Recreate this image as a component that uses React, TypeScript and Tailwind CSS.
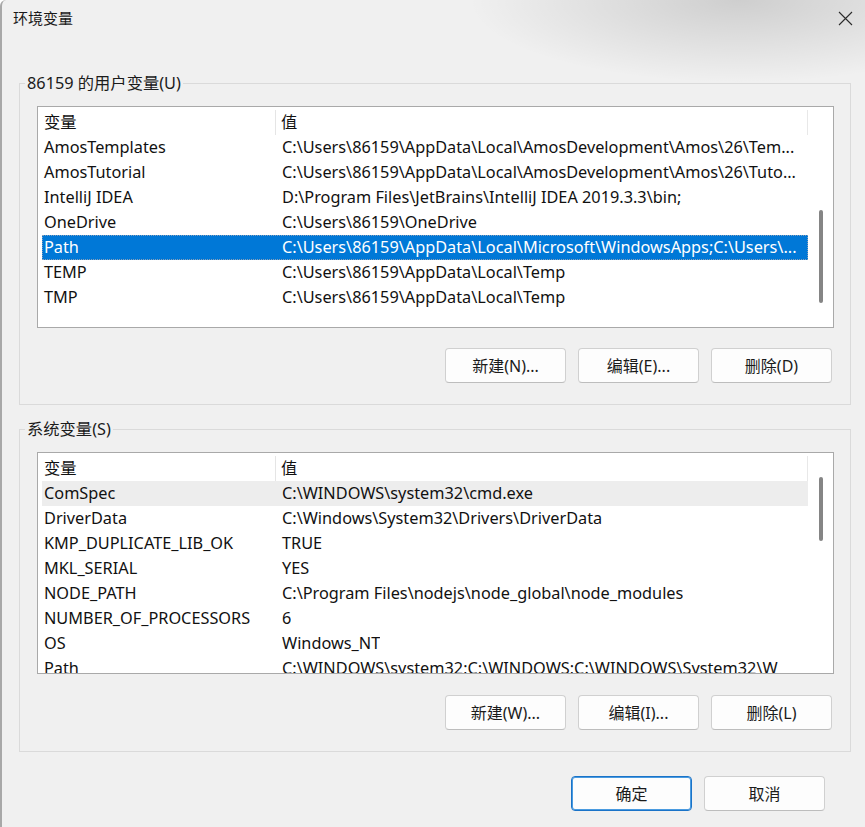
import React from "react";

type Row = { name: string; value: string };

const USER_VARS: Row[] = [
  { name: "AmosTemplates", value: "C:\\Users\\86159\\AppData\\Local\\AmosDevelopment\\Amos\\26\\Tem..." },
  { name: "AmosTutorial", value: "C:\\Users\\86159\\AppData\\Local\\AmosDevelopment\\Amos\\26\\Tuto..." },
  { name: "IntelliJ IDEA", value: "D:\\Program Files\\JetBrains\\IntelliJ IDEA 2019.3.3\\bin;" },
  { name: "OneDrive", value: "C:\\Users\\86159\\OneDrive" },
  { name: "Path", value: "C:\\Users\\86159\\AppData\\Local\\Microsoft\\WindowsApps;C:\\Users\\..." },
  { name: "TEMP", value: "C:\\Users\\86159\\AppData\\Local\\Temp" },
  { name: "TMP", value: "C:\\Users\\86159\\AppData\\Local\\Temp" },
];

const SYSTEM_VARS: Row[] = [
  { name: "ComSpec", value: "C:\\WINDOWS\\system32\\cmd.exe" },
  { name: "DriverData", value: "C:\\Windows\\System32\\Drivers\\DriverData" },
  { name: "KMP_DUPLICATE_LIB_OK", value: "TRUE" },
  { name: "MKL_SERIAL", value: "YES" },
  { name: "NODE_PATH", value: "C:\\Program Files\\nodejs\\node_global\\node_modules" },
  { name: "NUMBER_OF_PROCESSORS", value: "6" },
  { name: "OS", value: "Windows_NT" },
  { name: "Path", value: "C:\\WINDOWS\\system32;C:\\WINDOWS;C:\\WINDOWS\\System32\\W" },
];

function WinButton({ label, primary }: { label: string; primary?: boolean }) {
  return (
    <button
      className={`w-[121px] h-[35px] rounded-[4px] bg-[#fdfdfd] text-[16px] text-[#1b1b1b] border ${
        primary ? "border-[#1a73c8] shadow-[inset_0_0_0_1px_#4a9be0]" : "border-[#d0d0d0] border-b-[#bdbdbd]"
      }`}
    >
      {label}
    </button>
  );
}

function VarList({
  rows,
  selected,
  hovered,
  thumbTop,
  thumbHeight,
}: {
  rows: Row[];
  selected?: number;
  hovered?: number;
  thumbTop: string;
  thumbHeight: string;
}) {
  return (
    <div className="flex h-[222px] border border-[#a9a9a9] bg-white overflow-hidden">
      <div className="flex-1 min-w-0 pl-[4px] pt-[3px]">
        {/* header */}
        <div className="flex h-[25px] items-center border-r border-[#e8e8e8]">
          <div className="w-[234px] shrink-0 pl-[2px] border-r border-[#e5e5e5] h-full flex items-center">变量</div>
          <div className="pl-[5px]">值</div>
        </div>
        {rows.map((r, i) => {
          const isSel = i === selected;
          const isHover = i === hovered;
          return (
            <div
              key={r.name + i}
              className={`flex h-[25px] items-center whitespace-nowrap ${
                isSel
                  ? "bg-[#0078d7] text-white outline outline-1 outline-dotted outline-[#8aa0b8] -outline-offset-1"
                  : isHover
                  ? "bg-[#ededed]"
                  : ""
              }`}
            >
              <div className="w-[234px] shrink-0 pl-[2px] overflow-hidden">{r.name}</div>
              <div className="pl-[6px] overflow-hidden text-ellipsis">{r.value}</div>
            </div>
          );
        })}
      </div>
      {/* scrollbar */}
      <div className="w-[25px] shrink-0 flex justify-center">
        <div className={`w-[4px] rounded-full bg-[#858585] ${thumbTop} ${thumbHeight}`} />
      </div>
    </div>
  );
}

function Group({
  title,
  rows,
  buttons,
  selected,
  hovered,
  thumbTop,
  thumbHeight,
  buttonGap,
  className,
}: {
  title: string;
  rows: Row[];
  buttons: string[];
  selected?: number;
  hovered?: number;
  thumbTop: string;
  thumbHeight: string;
  buttonGap: string;
  className?: string;
}) {
  return (
    <fieldset className={`ml-[17px] w-[832px] border border-[#dadada] pl-[17px] pr-[16px] pt-[13px] pb-[21px] ${className ?? ""}`}>
      <legend className="-ml-[12px] px-[2px] text-[16.3px] leading-[20px] text-[#1b1b1b]">{title}</legend>
      <VarList rows={rows} selected={selected} hovered={hovered} thumbTop={thumbTop} thumbHeight={thumbHeight} />
      <div className={`flex justify-end gap-[12px] pr-[2px] ${buttonGap}`}>
        {buttons.map((b) => (
          <WinButton key={b} label={b} />
        ))}
      </div>
    </fieldset>
  );
}

export default function App() {
  return (
    <div
      className="relative w-[865px] h-[827px] overflow-hidden bg-[#f0f0f0] border-l-2 border-[#a8a8a8] rounded-tl-[6px] text-[16.3px] text-[#111]"
      style={{ fontFamily: '"Noto Sans", "Noto Sans CJK SC", sans-serif' }}
    >
      {/* window shadow falling on the title area */}
      <div className="pointer-events-none absolute right-0 top-0 w-[420px] h-[90px] bg-[radial-gradient(ellipse_at_70%_0%,rgba(0,0,0,0.14),rgba(0,0,0,0)_65%)]" />

      {/* title bar */}
      <div className="relative flex h-[36px] items-center justify-between pl-[11px] pr-[12px]">
        <span className="text-[15px] text-[#1a1a1a]">环境变量</span>
        <svg width="15" height="15" viewBox="0 0 15 15" className="text-[#2b2b2b]">
          <path d="M1 1L14 14M14 1L1 14" stroke="currentColor" strokeWidth="1.1" fill="none" />
        </svg>
      </div>

      <Group
        className="mt-[37px]"
        title="86159 的用户变量(U)"
        rows={USER_VARS}
        selected={4}
        buttons={["新建(N)...", "编辑(E)...", "删除(D)"]}
        thumbTop="mt-[103px]"
        thumbHeight="h-[93px]"
        buttonGap="mt-[20px]"
      />

      <Group
        className="mt-[14px]"
        title="系统变量(S)"
        rows={SYSTEM_VARS}
        hovered={0}
        buttons={["新建(W)...", "编辑(I)...", "删除(L)"]}
        thumbTop="mt-[24px]"
        thumbHeight="h-[64px]"
        buttonGap="mt-[21px]"
      />

      <div className="flex justify-end gap-[12px] mt-[24px] pr-[40px]">
        <WinButton label="确定" primary />
        <WinButton label="取消" />
      </div>
    </div>
  );
}
